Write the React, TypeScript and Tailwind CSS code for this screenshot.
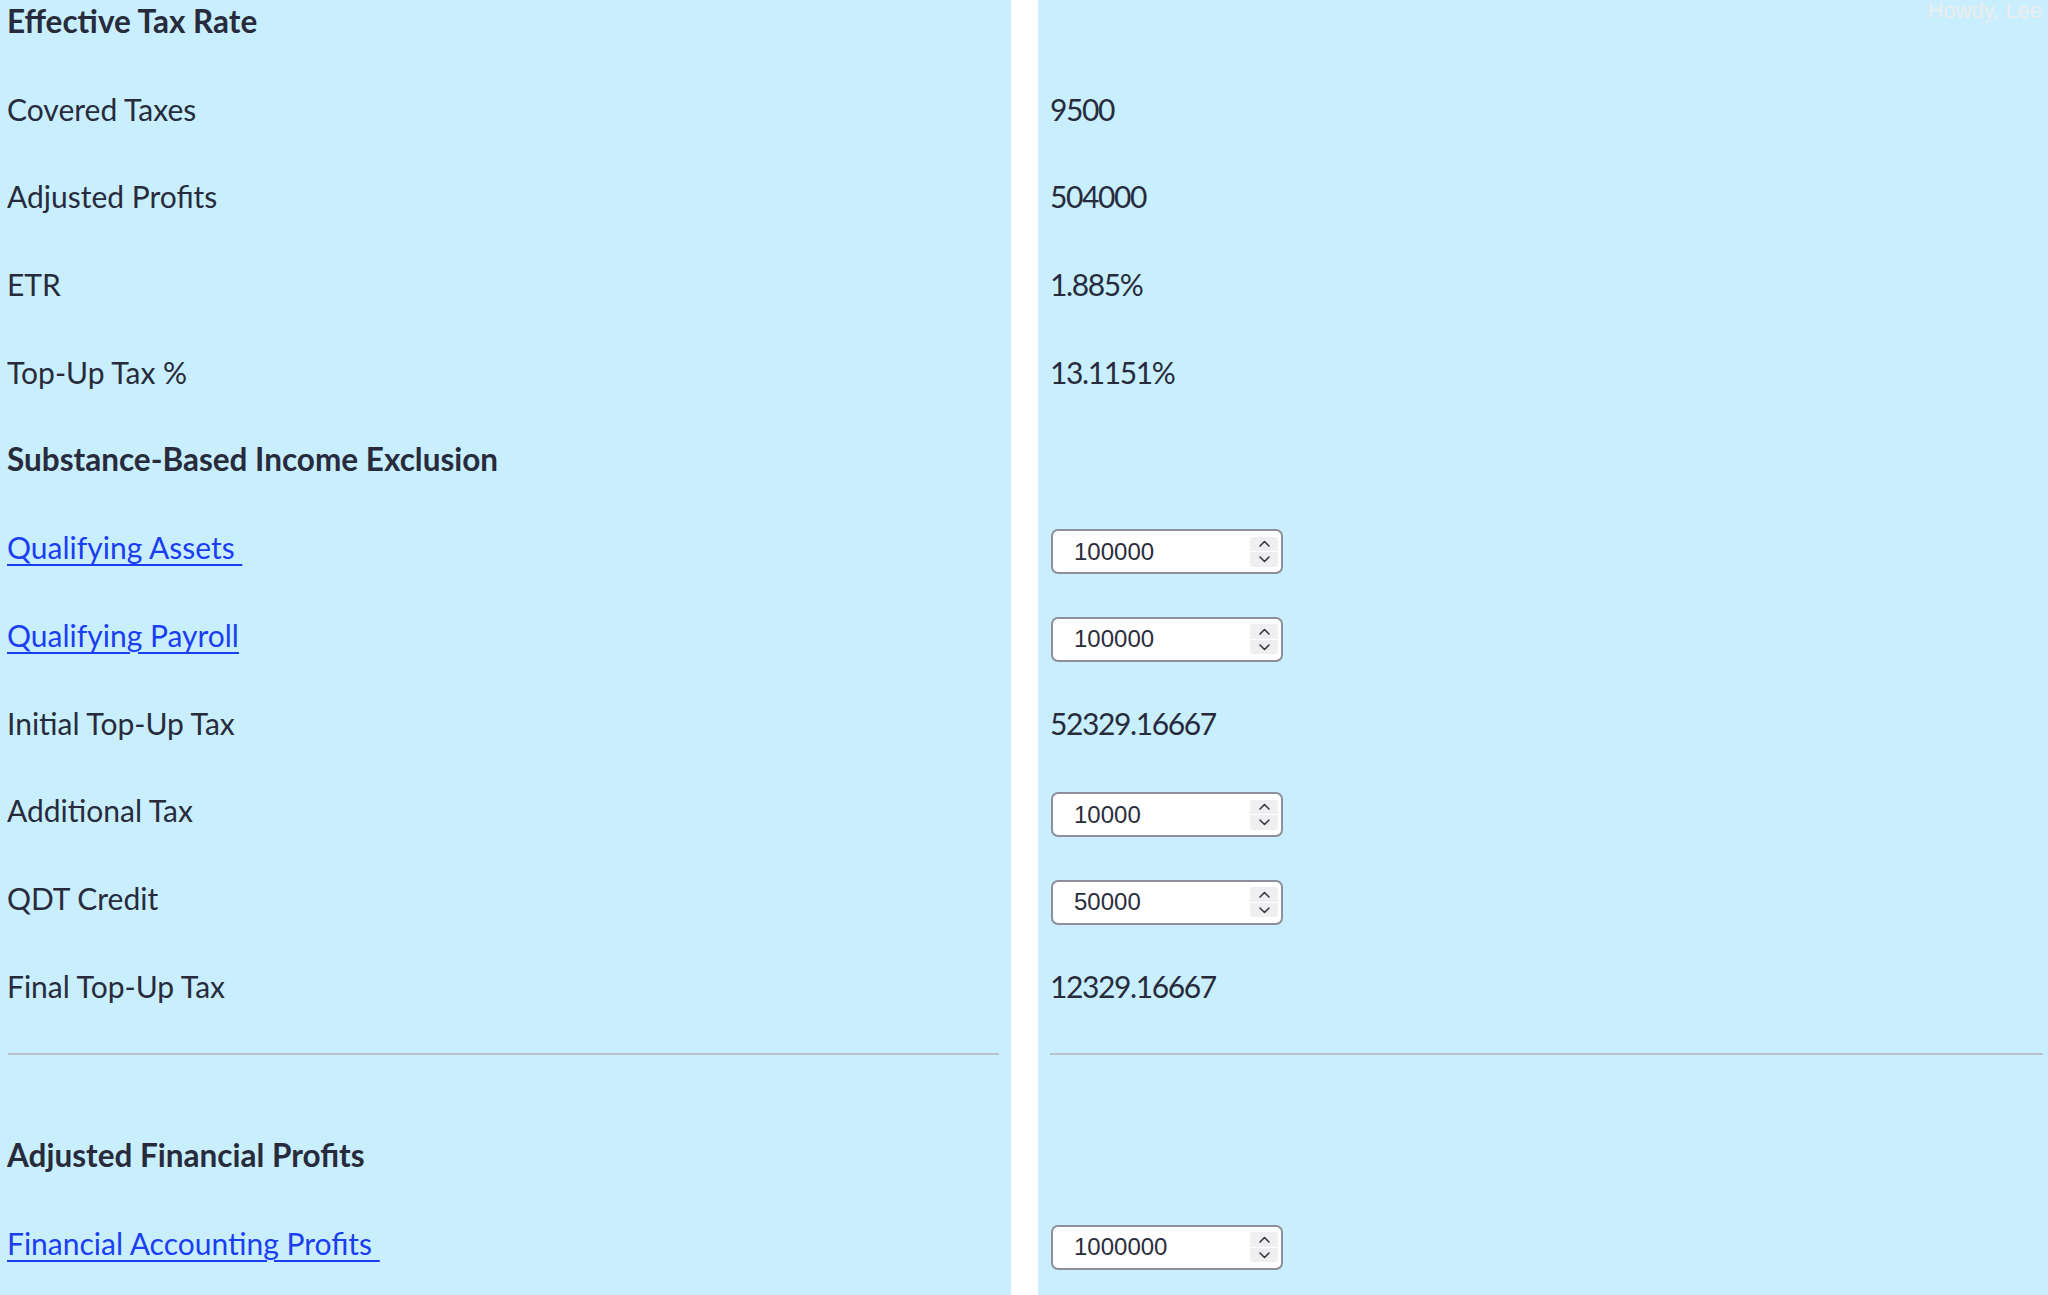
import React from "react";

type Row =
  | { kind: "header"; label: string }
  | { kind: "text"; label: string; value: string }
  | { kind: "link"; label: string; input: string }
  | { kind: "input"; label: string; input: string };

const rowsTop: Row[] = [
  { kind: "header", label: "Effective Tax Rate" },
  { kind: "text", label: "Covered Taxes", value: "9500" },
  { kind: "text", label: "Adjusted Profits", value: "504000" },
  { kind: "text", label: "ETR", value: "1.885%" },
  { kind: "text", label: "Top-Up Tax %", value: "13.1151%" },
  { kind: "header", label: "Substance-Based Income Exclusion" },
  { kind: "link", label: "Qualifying Assets ", input: "100000" },
  { kind: "link", label: "Qualifying Payroll", input: "100000" },
  { kind: "text", label: "Initial Top-Up Tax", value: "52329.16667" },
  { kind: "input", label: "Additional Tax", input: "10000" },
  { kind: "input", label: "QDT Credit", input: "50000" },
  { kind: "text", label: "Final Top-Up Tax", value: "12329.16667" },
];

const rowsBottom: Row[] = [
  { kind: "header", label: "Adjusted Financial Profits" },
  { kind: "link", label: "Financial Accounting Profits ", input: "1000000" },
];

function Chevron({ up }: { up?: boolean }) {
  return (
    <svg width="11" height="7" viewBox="0 0 11 7" fill="none">
      <path
        d={up ? "M1 6 L5.5 1.5 L10 6" : "M1 1 L5.5 5.5 L10 1"}
        stroke="#3a3a3c"
        strokeWidth="1.6"
        strokeLinecap="round"
        strokeLinejoin="round"
      />
    </svg>
  );
}

function NumberBox({ value }: { value: string }) {
  return (
    <div className="ml-[1px] flex h-[45px] w-[232px] items-center justify-between rounded-[7px] border-2 border-[#8f8f9b] bg-white pl-[21px] pr-[3px]">
      <span
        className="text-[24px] leading-none text-[#2b2d3c]"
        style={{ fontFamily: '"Liberation Sans", Arial, sans-serif' }}
      >
        {value}
      </span>
      <div className="flex h-[30px] w-[28px] flex-col gap-[1px]">
        <div className="flex flex-1 items-center justify-center rounded-t-[3px] bg-[#efeff2]">
          <Chevron up />
        </div>
        <div className="flex flex-1 items-center justify-center rounded-b-[3px] bg-[#efeff2]">
          <Chevron />
        </div>
      </div>
    </div>
  );
}

function LeftCell({ row }: { row: Row }) {
  return (
    <div className="h-[87.7px] leading-[42px]">
      {row.kind === "header" ? (
        <span className="text-[31.5px] font-bold">{row.label}</span>
      ) : row.kind === "link" ? (
        <a
          href="#"
          className="whitespace-pre text-[30px] text-[#1a3ef2] underline decoration-[2px] underline-offset-[5px]"
        >
          {row.label}
        </a>
      ) : (
        <span className="text-[30px]">{row.label}</span>
      )}
    </div>
  );
}

function RightCell({ row }: { row: Row }) {
  return (
    <div className="flex h-[87.7px] flex-col pt-[3px] leading-[36px]">
      {row.kind === "text" ? (
        <span className="text-[30px] tracking-[-1.4px]">{row.value}</span>
      ) : row.kind === "link" || row.kind === "input" ? (
        <NumberBox value={row.input} />
      ) : null}
    </div>
  );
}

export default function App() {
  const font = { fontFamily: '"Lato", "Noto Sans", sans-serif' };
  return (
    <div
      className="flex min-h-screen gap-[27px] bg-white text-[#282b3c]"
      style={font}
    >
      <div className="w-[1011px] shrink-0 bg-[#c9effe] pl-[7px] pr-3">
        {rowsTop.map((r, i) => (
          <LeftCell key={i} row={r} />
        ))}
        <div className="ml-[1px] mt-[1px] h-[2px] bg-[#b7c2c9]" />
        <div className="h-[79px]" />
        {rowsBottom.map((r, i) => (
          <LeftCell key={i} row={r} />
        ))}
      </div>
      <div className="relative flex-1 bg-[#c9effe] pl-3 pr-[5px]">
        <span
          className="absolute right-[6px] top-[-6px] text-[22px] leading-normal text-[#ececec]"
          style={{ fontFamily: '"Liberation Sans", Arial, sans-serif' }}
        >
          Howdy, Lee
        </span>
        {rowsTop.map((r, i) => (
          <RightCell key={i} row={r} />
        ))}
        <div className="mt-[1px] h-[2px] bg-[#b7c2c9]" />
        <div className="h-[79px]" />
        {rowsBottom.map((r, i) => (
          <RightCell key={i} row={r} />
        ))}
      </div>
    </div>
  );
}
